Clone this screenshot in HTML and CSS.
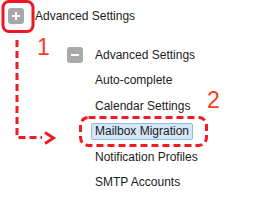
FILE: index.html
```html
<!DOCTYPE html>
<html>
<head>
  <meta name="viewport" content="width=device-width, initial-scale=1">
  <link rel="stylesheet" href="styles.css">
</head>
<body>
  <div class="tree">
    <div class="node top">
      <span class="toggle plus"></span>
      <span class="label">Advanced Settings</span>
    </div>

    <div class="branch">
      <div class="node">
        <span class="toggle minus"></span>
        <span class="label">Advanced Settings</span>
      </div>
      <ul class="items">
        <li><span class="item">Auto-complete</span></li>
        <li><span class="item">Calendar Settings</span></li>
        <li><span class="item selected">Mailbox Migration</span></li>
        <li><span class="item">Notification Profiles</span></li>
        <li><span class="item">SMTP Accounts</span></li>
      </ul>
    </div>
  </div>

  <!-- callouts drawn over the tree -->
  <svg class="marks" width="255" height="209" viewBox="0 0 255 209">
    <rect x="3" y="1.5" width="30" height="30" rx="6" class="box"/>
    <path d="M17 40 V137.5 H42" class="dash"/>
    <polyline points="45,132.5 53.5,138 45,143.5" class="head"/>
    <rect x="80.5" y="117.5" width="126" height="28" rx="8" class="dash"/>
    <text x="37" y="55" class="num">1</text>
    <text x="207" y="108" class="num">2</text>
  </svg>
</body>
</html>
```

FILE: styles.css
```css
body {
  margin: 0;
  font-family: "Liberation Sans", Arial, sans-serif;
  font-size: 12px;
  color: #1c1c1c;
  background: #fff;
  position: relative;
  width: 255px;
  height: 209px;
  overflow: hidden;
}
.tree {
  padding: 8px 0 0 8px;
}
.node {
  display: flex;
  align-items: center;
  height: 16px;
  line-height: 16px;
}
.node.top .toggle {
  margin-right: 11px;
}
.branch {
  margin: 23px 0 0 59px;
}
.branch .toggle {
  margin-right: 12px;
}
.toggle {
  position: relative;
  width: 16px;
  height: 16px;
  border-radius: 3px;
  background: #a9a9a9;
  flex: none;
}
.toggle::before,
.toggle::after {
  content: "";
  position: absolute;
  background: #fff;
}
.toggle::before {
  left: 4px;
  top: 7px;
  width: 8px;
  height: 2px;
}
.plus::after {
  left: 7px;
  top: 4px;
  width: 2px;
  height: 8px;
}
.minus::after {
  display: none;
}
.items {
  list-style: none;
  margin: 5px 0 0 0;
  padding: 0 0 0 28px;
}
.items li {
  display: flex;
  align-items: center;
  height: 25.5px;
}
.item {
  display: inline-block;
  line-height: 15px;
}
.item.selected {
  margin-left: -4px;
  padding: 0 3px;
  border: 1px solid #92bbe3;
  border-radius: 2px;
  background: #d4e6f8;
}
.marks {
  position: absolute;
  left: 0;
  top: 0;
  pointer-events: none;
}
.marks .box {
  fill: none;
  stroke: #ee1620;
  stroke-width: 3;
}
.marks .dash {
  fill: none;
  stroke: #ee1c25;
  stroke-width: 3;
  stroke-dasharray: 7 4;
}
.marks .head {
  fill: none;
  stroke: #ee1c25;
  stroke-width: 3;
}
.marks .num {
  font-family: "Liberation Sans", Arial, sans-serif;
  font-size: 23px;
  fill: #fb3a22;
}
```
